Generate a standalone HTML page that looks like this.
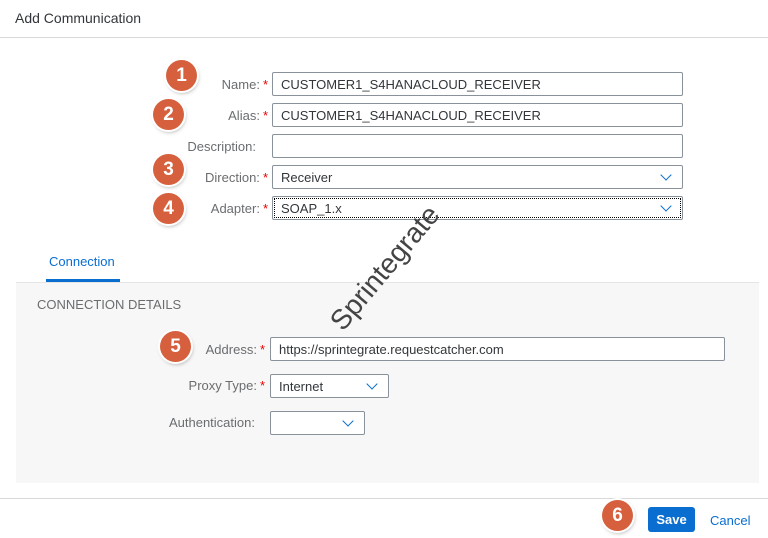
<!DOCTYPE html>
<html><head><style>
*{box-sizing:border-box;margin:0;padding:0}
body{width:768px;height:538px;background:#fff;font-family:"Liberation Sans",sans-serif;position:relative;overflow:hidden;color:#32363a}
.a{position:absolute}
.lbl{position:absolute;font-size:13px;color:#6a6d70;text-align:right;white-space:nowrap}
.lbl b{color:#e00;font-weight:normal;margin-left:3px}
.in{position:absolute;border:1px solid #89919a;border-radius:2px;background:#fff;font-size:13px;color:#32363a;padding-left:8px;line-height:23px}
.dd::after{content:"";position:absolute;right:12px;top:5px;width:7px;height:7px;border-right:1.3px solid #0a6ed1;border-bottom:1.3px solid #0a6ed1;transform:rotate(45deg)}
.bd{position:absolute;width:31px;height:31px;border-radius:50%;background:#d6603e;color:#fff;font-weight:bold;font-size:19px;text-align:center;line-height:31px;box-shadow:0 0 0 2px #fff,1px 2px 4px rgba(0,0,0,.35)}
</style></head><body>
<div class="a" style="left:15px;top:10px;font-size:14px;color:#32363a">Add Communication</div>
<div class="a" style="left:0;top:37px;width:768px;height:1px;background:#d9d9d9"></div>

<div class="lbl" style="right:500px;top:77px">Name:<b>*</b></div>
<div class="in" style="left:272px;top:72px;width:411px;height:24px">CUSTOMER1_S4HANACLOUD_RECEIVER</div>
<div class="lbl" style="right:500px;top:108px">Alias:<b>*</b></div>
<div class="in" style="left:272px;top:103px;width:411px;height:24px">CUSTOMER1_S4HANACLOUD_RECEIVER</div>
<div class="lbl" style="right:512px;top:139px">Description:</div>
<div class="in" style="left:272px;top:134px;width:411px;height:24px"></div>
<div class="lbl" style="right:500px;top:170px">Direction:<b>*</b></div>
<div class="in dd" style="left:272px;top:165px;width:411px;height:24px">Receiver</div>
<div class="lbl" style="right:500px;top:201px">Adapter:<b>*</b></div>
<div class="in dd" style="left:272px;top:196px;width:411px;height:24px;outline:1px dotted #000;outline-offset:-3px">SOAP_1.x</div>

<div class="bd" style="left:166px;top:60px">1</div>
<div class="bd" style="left:153px;top:99px">2</div>
<div class="bd" style="left:153px;top:154px">3</div>
<div class="bd" style="left:153px;top:193px">4</div>

<div class="a" style="left:49px;top:254px;font-size:13px;color:#0a6ed1">Connection</div>
<div class="a" style="left:46px;top:279px;width:74px;height:3px;background:#0a6ed1"></div>
<div class="a" style="left:16px;top:282px;width:743px;height:201px;background:#f7f7f7;border-top:1px solid #e5e5e5"></div>
<div class="a" style="left:37px;top:297px;font-size:13px;color:#6a6d70">CONNECTION DETAILS</div>

<div class="lbl" style="right:503px;top:342px">Address:<b>*</b></div>
<div class="in" style="left:270px;top:337px;width:455px;height:24px">https://sprintegrate.requestcatcher.com</div>
<div class="lbl" style="right:503px;top:378px">Proxy Type:<b>*</b></div>
<div class="in dd" style="left:270px;top:374px;width:119px;height:24px">Internet</div>
<div class="lbl" style="right:513px;top:415px">Authentication:</div>
<div class="in dd" style="left:270px;top:411px;width:95px;height:24px"></div>
<div class="bd" style="left:160px;top:331px">5</div>

<div class="a" style="left:0;top:498px;width:768px;height:1px;background:#d9d9d9"></div>
<div class="bd" style="left:602px;top:500px">6</div>
<div class="a" style="left:648px;top:507px;width:47px;height:25px;background:#0a6ed1;border-radius:3px;color:#fff;font-weight:bold;font-size:13px;text-align:center;line-height:25px">Save</div>
<div class="a" style="left:710px;top:513px;font-size:13px;color:#0a6ed1">Cancel</div>

<div class="a" style="left:300px;top:252px;font-size:28px;color:#444;transform:rotate(-50deg);transform-origin:center;width:170px;text-align:center">Sprintegrate</div>
</body></html>
